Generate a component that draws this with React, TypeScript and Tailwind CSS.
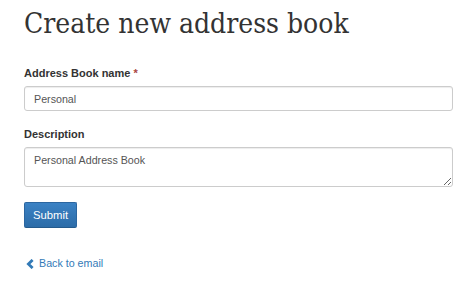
import React from "react";

export default function App() {
  return (
    <div className="min-h-screen bg-white px-6 pt-[5px] text-[10.7px] text-[#333]" style={{ fontFamily: '"Liberation Sans", Arial, sans-serif' }}>
      <h1 className="text-[28px] leading-[38px] font-normal text-[#333] font-stretch-condensed" style={{ fontFamily: '"DejaVu Serif", serif' }}>
        Create new address book
      </h1>
      <form className="mt-[22px] w-[429px]" onSubmit={(e) => e.preventDefault()}>
        <div className="mb-[15px]">
          <label className="block font-bold leading-[17px] mb-[4px] text-[11px]">
            Address Book name <span className="text-[#a94442]">*</span>
          </label>
          <input
            defaultValue="Personal"
            className="block w-full h-[25px] px-[9px] rounded-[3px] border border-[#ccc] text-[#555] shadow-[inset_0_1px_1px_rgba(0,0,0,0.075)] outline-none text-[10.7px]"
          />
        </div>
        <div className="mb-[15px]">
          <label className="block font-bold leading-[17px] mb-[4px] text-[11px]">Description</label>
          <textarea
            defaultValue="Personal Address Book"
            className="block w-full h-[40px] px-[9px] py-[4px] rounded-[3px] border border-[#ccc] text-[#555] shadow-[inset_0_1px_1px_rgba(0,0,0,0.075)] outline-none text-[10.7px] leading-[16px] resize-y"
          />
        </div>
        <button
          type="submit"
          className="block h-[26px] w-[53px] rounded-[2px] border border-[#2b66a0] border-b-[#245a8c] text-white text-[11.3px] bg-gradient-to-b from-[#3b82c4] to-[#2c6ca8]"
        >
          Submit
        </button>
      </form>
      <a href="#" className="mt-[27px] flex items-center gap-[4px] text-[#337ab7] text-[10.7px] leading-[17px] w-fit">
        <svg width="9" height="10" viewBox="0 0 9 10" className="ml-[2px]">
          <path d="M6.6 0.9 L2.4 5 L6.6 9.1" fill="none" stroke="#337ab7" strokeWidth="2.8" strokeLinejoin="miter" />
        </svg>
        <span>Back to email</span>
      </a>
    </div>
  );
}
